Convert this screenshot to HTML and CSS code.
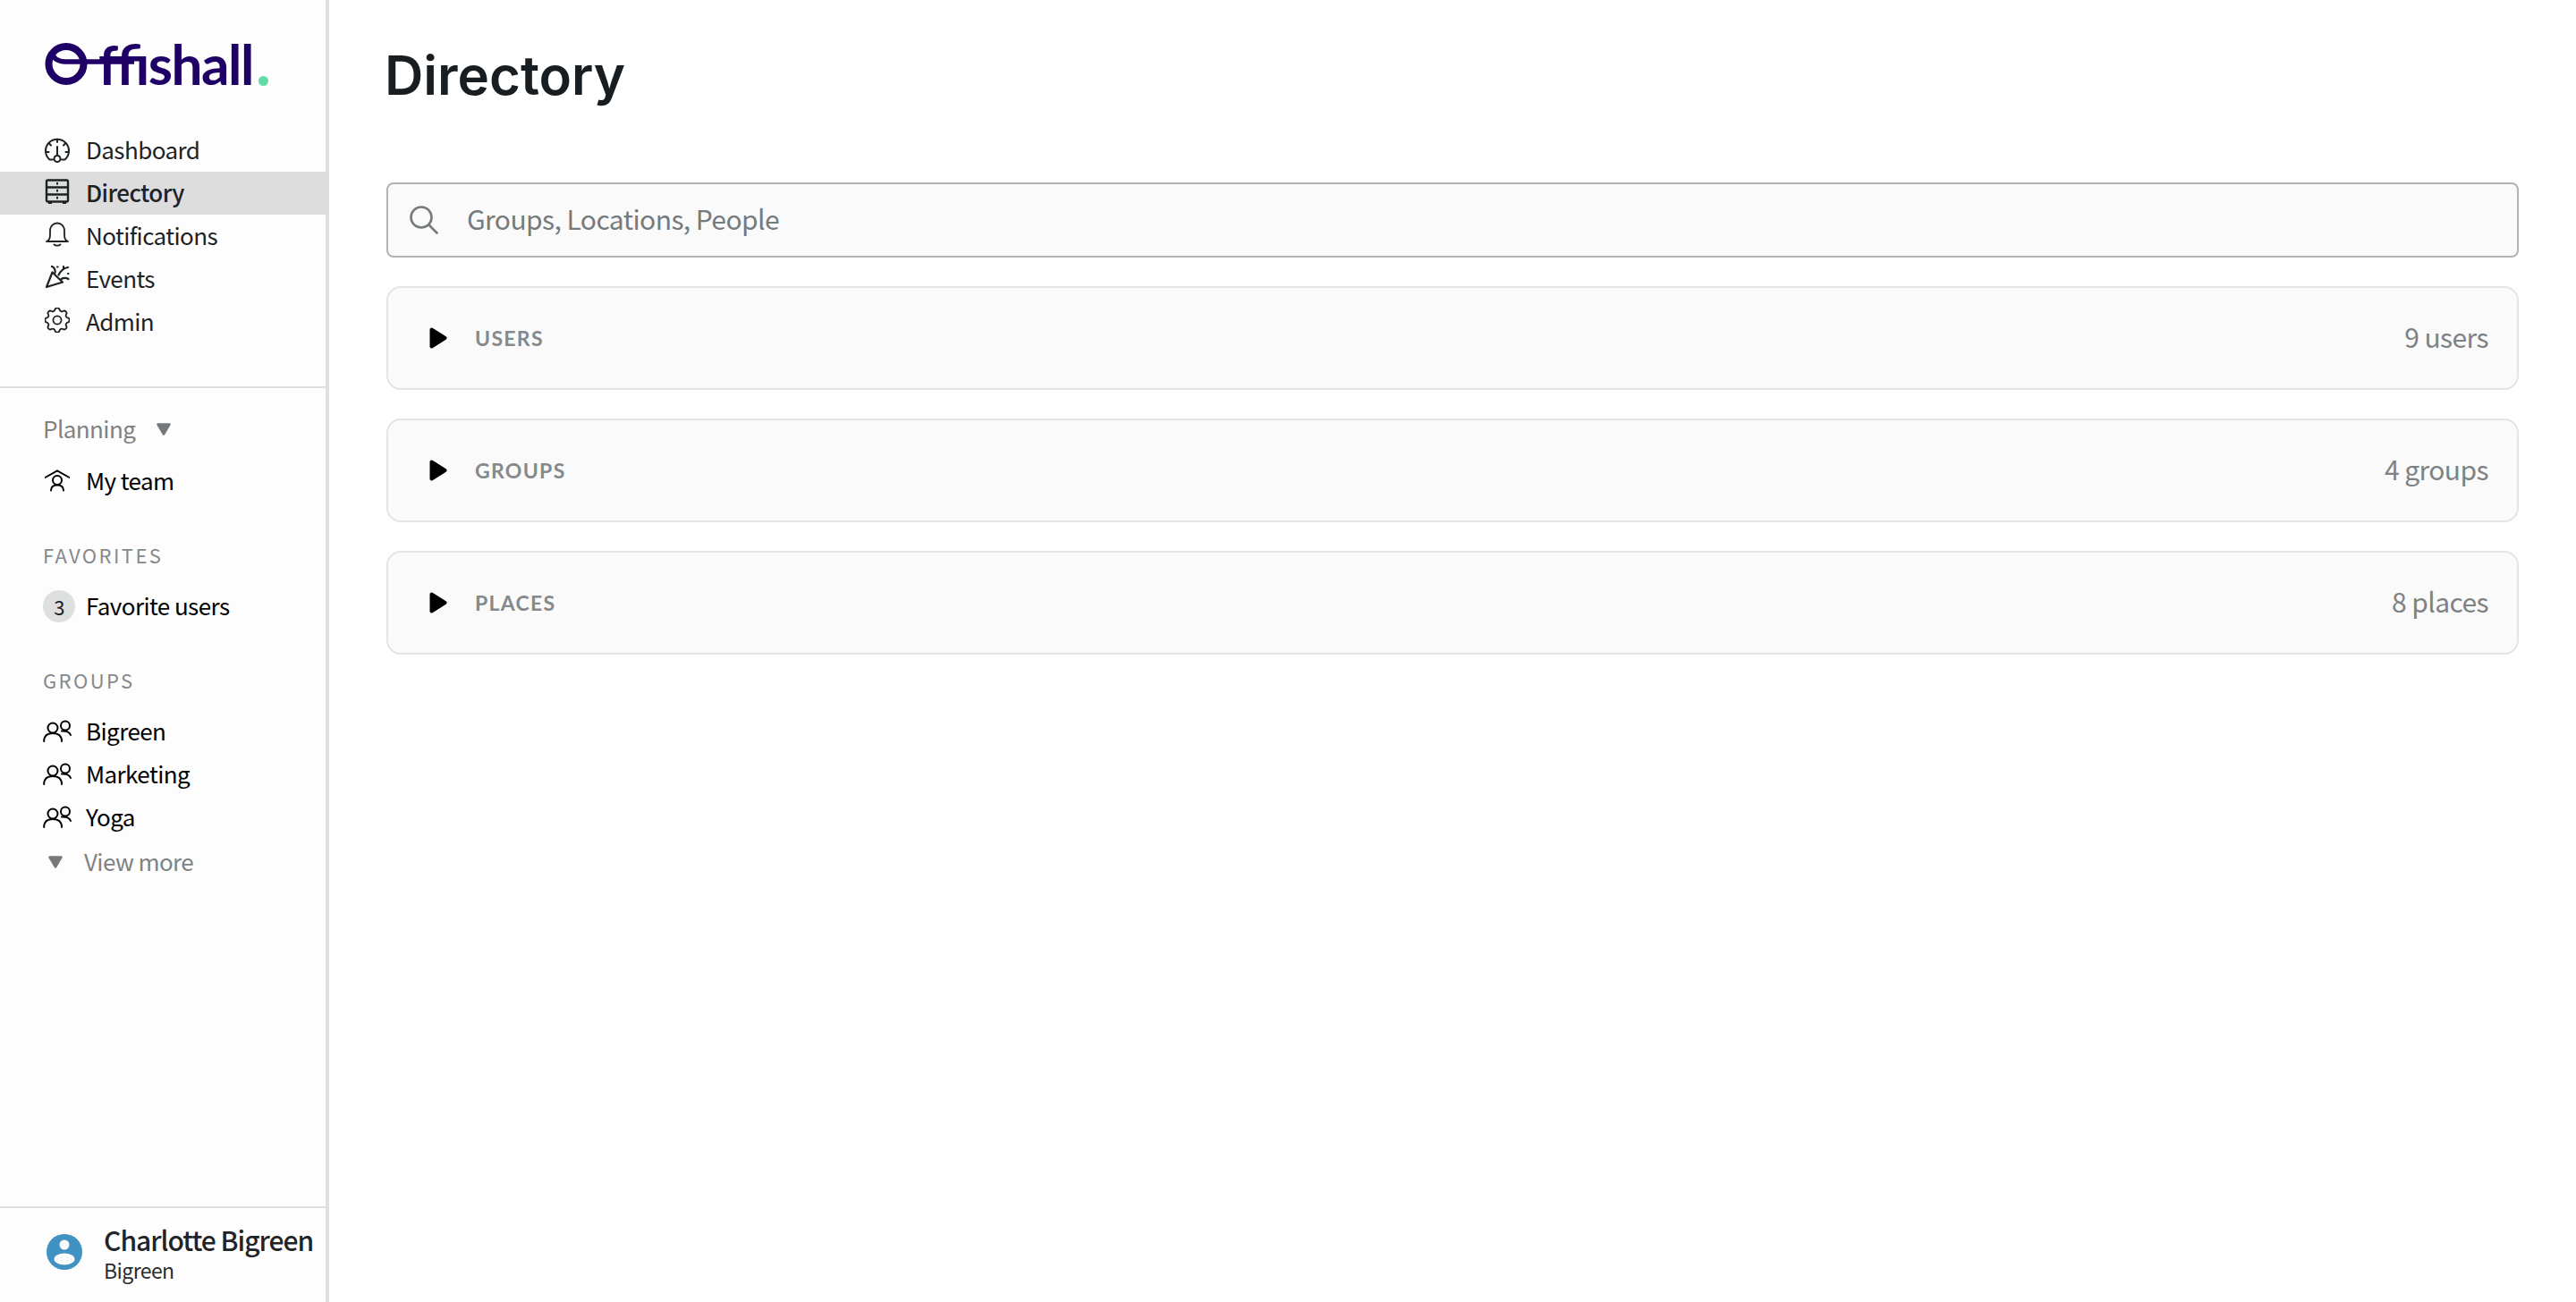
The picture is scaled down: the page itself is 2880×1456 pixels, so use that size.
FILE: index.html
```html
<!DOCTYPE html>
<html lang="en">
<head>
<meta charset="utf-8">
<title>Directory</title>
<link rel="stylesheet" href="styles.css">
</head>
<body>
<div class="app">
  <aside class="sidebar">
    <div class="logo">
      <svg class="logo-o" width="108" height="50" viewBox="0 0 108 50"><circle cx="24" cy="26.500" r="19.500" fill="none" stroke="#1e0066" stroke-width="8"/><path d="M7 13c2 6 7 11 16 11H100" fill="none" stroke="#1e0066" stroke-width="5.500"/></svg>
      <span class="logo-text">ffishall</span><span class="logo-dot"></span>
    </div>
    <nav class="nav">
      <a class="nav-item"><svg class="icon" viewBox="0 0 28 28"><g fill="none" stroke="#1d2225" stroke-width="2" stroke-linecap="round"><path d="M9 24.500H5.500A13 13 0 1 1 22.500 24.500H19"/><circle cx="14" cy="23.500" r="3.500"/><path d="M14 20V10M14 2v3M5 6.500l2 2M23 6.500l-2 2M1.500 16H4.500M26.500 16H23.500"/></g></svg><span>Dashboard</span></a>
      <a class="nav-item active"><svg class="icon up" viewBox="0 0 28 28"><g fill="none" stroke="#1d2225" stroke-width="2.400"><rect x="2" y="1.500" width="24" height="24" rx="1.500"/><path d="M2 9.500H26M2 17.500H26"/></g><path d="M4 25.500h4v2.500H4zM20 25.500h4v2.500h-4z" fill="#1d2225"/><path d="M14 4v2.500M14 12v2.500M14 20v2.500" stroke="#1d2225" stroke-width="2" fill="none"/></svg><span>Directory</span></a>
      <a class="nav-item"><svg class="icon up" viewBox="0 0 28 28"><g fill="none" stroke="#1d2225" stroke-width="1.800" stroke-linecap="round" stroke-linejoin="round"><path d="M2 22c2.500-1 4-3 4-7V9.500a8 8 0 0 1 16 0V15c0 4 1.500 6 4 7z"/><path d="M10.500 25.500c1.500 1.500 5.500 1.500 7 0"/></g></svg><span>Notifications</span></a>
      <a class="nav-item"><svg class="icon up" viewBox="0 0 28 28"><g fill="none" stroke="#1d2225" stroke-width="2.200" stroke-linecap="round" stroke-linejoin="round"><path d="M2 25 8.500 8.500 20 19.500z"/><path d="M8 2c2.500 1 4 3.500 3.500 7M26 3c-3.500.5-8 3.500-10.500 8.500M26.500 16c-2.500-1.500-5.500-1.500-8 0M14 2.500h.5M21 2v2M26 10h.5"/></g></svg><span>Events</span></a>
      <a class="nav-item"><svg class="icon up" viewBox="2.800 2.800 18.400 18.400"><g fill="none" stroke="#1d2225" stroke-width="1.200" stroke-linecap="round" stroke-linejoin="round"><path d="M10.325 4.317c.426-1.756 2.924-1.756 3.350 0a1.724 1.724 0 002.573 1.066c1.543-.94 3.310.826 2.370 2.370a1.724 1.724 0 001.065 2.572c1.756.426 1.756 2.924 0 3.350a1.724 1.724 0 00-1.066 2.573c.94 1.543-.826 3.310-2.370 2.370a1.724 1.724 0 00-2.572 1.065c-.426 1.756-2.924 1.756-3.350 0a1.724 1.724 0 00-2.573-1.066c-1.543.94-3.310-.826-2.370-2.370a1.724 1.724 0 00-1.065-2.572c-1.756-.426-1.756-2.924 0-3.350a1.724 1.724 0 001.066-2.573c-.94-1.543.826-3.310 2.370-2.370.996.608 2.296.07 2.572-1.065z"/><path d="M15 12a3 3 0 11-6 0 3 3 0 016 0z"/></g></svg><span>Admin</span></a>
    </nav>
    <div class="section-first">
      <div class="planning"><span>Planning</span><svg class="tri" viewBox="0 0 16 14"><path d="M1.500 1.500h13L8 12.500z" fill="#75797b" stroke="#75797b" stroke-width="2.500" stroke-linejoin="round"/></svg></div>
      <a class="nav-item black team"><svg class="icon" viewBox="0 0 28 28"><g fill="none" stroke="#000" stroke-width="2" stroke-linecap="round"><path d="M.5 10 14 2.500 27.500 10"/><circle cx="14" cy="13" r="5"/><path d="M7 24.500C7 20.500 10 18.500 14 18.500S21 20.500 21 24.500"/></g></svg><span>My team</span></a>
    </div>
    <div class="section">
      <div class="heading">FAVORITES</div>
      <a class="nav-item black fav"><span class="badge">3</span><span>Favorite users</span></a>
    </div>
    <div class="section">
      <div class="heading">GROUPS</div>
      <a class="nav-item black"><svg class="icon group" viewBox="0 0 32 26"><g fill="none" stroke="#000" stroke-width="2" stroke-linecap="round"><circle cx="11" cy="9" r="5.500"/><circle cx="25" cy="6.500" r="5"/><path d="M1.200 24C1.200 18 5 15 11 15S21 18 21 24"/><path d="M21 12.500C26 12 30 14 31 17"/></g></svg><span>Bigreen</span></a>
      <a class="nav-item black"><svg class="icon group" viewBox="0 0 32 26"><g fill="none" stroke="#000" stroke-width="2" stroke-linecap="round"><circle cx="11" cy="9" r="5.500"/><circle cx="25" cy="6.500" r="5"/><path d="M1.200 24C1.200 18 5 15 11 15S21 18 21 24"/><path d="M21 12.500C26 12 30 14 31 17"/></g></svg><span>Marketing</span></a>
      <a class="nav-item black"><svg class="icon group" viewBox="0 0 32 26"><g fill="none" stroke="#000" stroke-width="2" stroke-linecap="round"><circle cx="11" cy="9" r="5.500"/><circle cx="25" cy="6.500" r="5"/><path d="M1.200 24C1.200 18 5 15 11 15S21 18 21 24"/><path d="M21 12.500C26 12 30 14 31 17"/></g></svg><span>Yoga</span></a>
      <a class="more"><svg class="tri" viewBox="0 0 16 14"><path d="M1.500 1.500h13L8 12.500z" fill="#75797b" stroke="#75797b" stroke-width="2.500" stroke-linejoin="round"/></svg><span>View more</span></a>
    </div>
    <div class="user">
      <svg class="avatar" viewBox="0 0 40 40"><circle cx="20" cy="20" r="20" fill="#3f92c2"/><circle cx="20" cy="12" r="5.500" fill="#fdfdfd"/><ellipse cx="20" cy="28" rx="11.500" ry="6.500" fill="#fdfdfd"/></svg>
      <div class="user-text"><div class="user-name">Charlotte Bigreen</div><div class="user-org">Bigreen</div></div>
    </div>
  </aside>
  <main class="main">
    <h1 class="title">Directory</h1>
    <div class="search">
      <svg class="search-icon" viewBox="0 0 32 32"><g fill="none" stroke="#757a7c" stroke-width="2.600" stroke-linecap="round"><circle cx="13" cy="13" r="11.500"/><path d="M22 22l8.500 8.500"/></g></svg>
      <span class="placeholder">Groups, Locations, People</span>
    </div>
    <div class="card"><svg class="play" viewBox="0 0 20 24"><path d="M2.500 2.500 17.500 12 2.500 21.500z" fill="#000" stroke="#000" stroke-width="4" stroke-linejoin="round"/></svg><span class="card-label">USERS</span><span class="card-count">9 users</span></div>
    <div class="card"><svg class="play" viewBox="0 0 20 24"><path d="M2.500 2.500 17.500 12 2.500 21.500z" fill="#000" stroke="#000" stroke-width="4" stroke-linejoin="round"/></svg><span class="card-label">GROUPS</span><span class="card-count">4 groups</span></div>
    <div class="card"><svg class="play" viewBox="0 0 20 24"><path d="M2.500 2.500 17.500 12 2.500 21.500z" fill="#000" stroke="#000" stroke-width="4" stroke-linejoin="round"/></svg><span class="card-label">PLACES</span><span class="card-count">8 places</span></div>
  </main>
</div>
</body>
</html>
```
FILE: styles.css
```css
* { box-sizing: border-box; }
html, body { margin: 0; height: 100%; }
body { font-family: "Noto Sans CJK SC", "Noto Sans", sans-serif; background: #fff; color: #1d2225; letter-spacing: -0.036em; }
.app { display: flex; height: 100vh; }
.sidebar { width: 368px; flex: none; display: flex; flex-direction: column; background: #fdfdfd; border-right: 4px solid #dee0e0; }
.logo { height: 144px; padding: 47px 0 0 50px; display: flex; align-items: flex-start; color: #1e0066; position: relative; }
.logo-o { position: absolute; left: 50px; top: 45px; }
.logo-text { margin-left: 60px; font-family: "Lato", sans-serif; font-weight: 700; font-size: 62px; line-height: 48px; letter-spacing: -1.500px; font-feature-settings: "liga" 1; }
.logo-dot { width: 11px; height: 11px; border-radius: 50%; background: #62dba8; margin: 38px 0 0 6px; }
.nav { padding-bottom: 48px; border-bottom: 2px solid #dee0e0; }
.nav-item { display: flex; align-items: center; height: 48px; padding-left: 50px; font-size: 26px; line-height: 48px; color: #1d2225; }
.nav-item > span:last-child { margin-top: -2px; }
.nav-item.black { color: #000; }
.nav-item.active { background: #ddd; font-weight: 500; margin-right: -4px; }
.icon { width: 28px; height: 28px; margin-right: 18px; flex: none; }
.icon.up { margin-top: -4px; }
.icon.group { width: 32px; margin-left: -2px; margin-right: 16px; height: 26px; }
.section { padding-top: 40px; }
.section-first { padding-top: 22px; }
.planning { display: flex; align-items: center; gap: 24px; height: 48px; padding-left: 48px; font-size: 26px; color: #7d8284; }
.planning span { margin-top: -4px; }
.tri { width: 16px; height: 14px; flex: none; }
.team { margin-top: 10px; }
.heading { padding-left: 48px; font-size: 22px; line-height: 36px; letter-spacing: 2.400px; color: #85898b; margin-bottom: 16px; }
.fav { padding-left: 48px; }
.badge { width: 36px; height: 36px; border-radius: 50%; background: #dee0e0; margin-right: 12px; font-size: 22px; line-height: 36px; text-align: center; flex: none; color: #1d2225; }
.more { display: flex; align-items: center; height: 48px; margin-top: 2px; padding-left: 54px; font-size: 26px; color: #7d8284; }
.more .tri { margin-right: 24px; }
.more span { margin-top: -4px; }
.user { margin-top: auto; height: 107px; border-top: 2px solid #dee0e0; display: flex; align-items: center; padding: 0 0 8px 52px; }
.avatar { width: 40px; height: 40px; margin-right: 24px; flex: none; }
.user-text { padding-top: 2px; }
.user-name { font-size: 30px; line-height: 38px; font-weight: 500; color: #212427; white-space: nowrap; letter-spacing: -1px; }
.user-org { font-size: 23px; line-height: 30px; color: #2a2d30; }
.main { flex: 1; min-width: 0; padding: 0 64px; }
.title { margin: 0 0 0 -2px; height: 204px; padding-top: 48px; font-family: "Inter", sans-serif; font-size: 60px; line-height: 72px; font-weight: 600; color: #171d21; letter-spacing: 0; }
.search { display: flex; align-items: center; height: 84px; border: 2px solid #aeb3b5; border-radius: 8px; background: #fafafa; padding-left: 24px; margin-bottom: 32px; }
.search-icon { width: 32px; height: 32px; flex: none; margin-right: 32px; }
.placeholder { font-size: 30px; color: #757a7c; margin-top: -4px; }
.card { display: flex; align-items: center; height: 116px; border: 2px solid #e3e4e4; border-radius: 16px; background: #fafafa; padding: 0 32px 0 46px; margin-bottom: 32px; }
.play { width: 20px; height: 24px; flex: none; margin-right: 31px; }
.card-label { font-family: "Lato", sans-serif; font-size: 23px; font-weight: 700; letter-spacing: 1.300px; color: #85898b; }
.card-count { margin-left: auto; font-size: 30px; color: #7d8284; margin-top: -4px; }
```
